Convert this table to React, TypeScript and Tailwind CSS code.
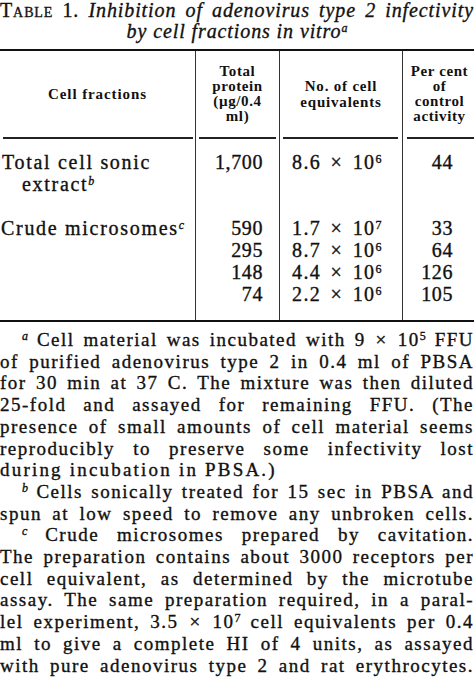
import React from 'react';

type Line = { text: React.ReactNode; mark?: string; left?: boolean };

const Sup = ({ children, italic }: { children: React.ReactNode; italic?: boolean }) => (
  <sup className={`text-[12px] tracking-normal ${italic ? 'italic' : ''}`}>{children}</sup>
);

const times = (a: string, exp: string) => (
  <>
    {a} <span className="mx-[3px]">×</span> 10<Sup>{exp}</Sup>
  </>
);

const notes: Line[] = [
  { mark: 'a', text: <>Cell material was incubated with 9 <span className="mx-[1px]">×</span> 10<Sup>5</Sup> FFU</> },
  { text: 'of purified adenovirus type 2 in 0.4 ml of PBSA' },
  { text: 'for 30 min at 37 C. The mixture was then diluted' },
  { text: '25-fold and assayed for remaining FFU. (The' },
  { text: 'presence of small amounts of cell material seems' },
  { text: 'reproducibly to preserve some infectivity lost' },
  { text: 'during incubation in PBSA.)', left: true },
  { mark: 'b', text: 'Cells sonically treated for 15 sec in PBSA and' },
  { text: 'spun at low speed to remove any unbroken cells.' },
  { mark: 'c', text: 'Crude microsomes prepared by cavitation.' },
  { text: 'The preparation contains about 3000 receptors per' },
  { text: 'cell equivalent, as determined by the microtube' },
  { text: 'assay. The same preparation required, in a paral-' },
  { text: <>lel experiment, 3.5 <span className="mx-[1px]">×</span> 10<Sup>7</Sup> cell equivalents per 0.4</> },
  { text: 'ml to give a complete HI of 4 units, as assayed' },
  { text: 'with pure adenovirus type 2 and rat erythrocytes.' },
];

const Blank = () => <div className="h-[22px]" />;

export default function App() {
  return (
    <div className="w-[474px] h-[678px] overflow-hidden bg-white text-[#111] [-webkit-text-stroke:0.35px] font-['Liberation_Serif','Times_New_Roman',serif]">
      {/* caption */}
      <div className="text-[20px] leading-[21px] tracking-[0.9px]">
        <div className="text-justify [text-align-last:justify]">
          <span className="[font-variant:small-caps]">Table 1.</span>{' '}
          <i>Inhibition of adenovirus type 2 infectivity</i>
        </div>
        <div className="text-center italic">
          by cell fractions in vitro<Sup italic>a</Sup>
        </div>
      </div>

      <div className="mt-[7px] h-[2px] bg-[#111]" />

      {/* table */}
      <div className="flex">
        <div className="w-[195px] flex flex-col">
          <div className="h-[86px] flex items-center justify-center text-[15px] leading-[16px] font-bold tracking-[0.9px] [-webkit-text-stroke:0px]">
            Cell fractions
          </div>
          <div className="h-[2px] ml-[3px] mr-[2px] bg-[#222]" />
          <div className="pt-[12px] pb-[15px] text-[20px] leading-[22px] tracking-[1.7px]">
            <div className="pl-[2px]">Total cell sonic</div>
            <div className="pl-[22px]">extract<Sup italic>b</Sup></div>
            <Blank />
            <div className="pl-[1px]">Crude microsomes<Sup italic>c</Sup></div>
          </div>
        </div>

        <div className="w-[84px] flex flex-col border-l border-[#333]">
          <div className="h-[86px] flex flex-col items-center justify-center text-center text-[15px] leading-[15px] font-bold tracking-[0.6px] [-webkit-text-stroke:0px]">
            <div>Total</div>
            <div>protein</div>
            <div>(µg/0.4</div>
            <div>ml)</div>
          </div>
          <div className="h-[2px] mx-[3px] bg-[#222]" />
          <div className="pt-[12px] pb-[15px] pr-[16px] text-right text-[20px] leading-[22px] tracking-[0.6px]">
            <div>1,700</div>
            <Blank />
            <Blank />
            <div>590</div>
            <div>295</div>
            <div>148</div>
            <div>74</div>
          </div>
        </div>

        <div className="w-[123px] flex flex-col border-l border-[#333]">
          <div className="h-[86px] flex flex-col items-center justify-center text-center text-[15px] leading-[16px] font-bold tracking-[0.8px] [-webkit-text-stroke:0px]">
            <div>No. of cell</div>
            <div>equivalents</div>
          </div>
          <div className="h-[2px] ml-[3px] mr-[4px] bg-[#222]" />
          <div className="pt-[12px] pb-[15px] pl-[12px] text-[20px] leading-[22px] tracking-[1.4px] whitespace-nowrap">
            <div>{times('8.6', '6')}</div>
            <Blank />
            <Blank />
            <div>{times('1.7', '7')}</div>
            <div>{times('8.7', '6')}</div>
            <div>{times('4.4', '6')}</div>
            <div>{times('2.2', '6')}</div>
          </div>
        </div>

        <div className="w-[72px] flex flex-col border-l border-[#333]">
          <div className="h-[86px] flex flex-col items-center justify-center text-center text-[15px] leading-[15px] font-bold tracking-[0.6px] pl-[2px] [-webkit-text-stroke:0px]">
            <div className="whitespace-nowrap">Per cent</div>
            <div>of</div>
            <div>control</div>
            <div>activity</div>
          </div>
          <div className="h-[2px] ml-[4px] bg-[#222]" />
          <div className="pt-[12px] pb-[15px] pr-[21px] text-right text-[20px] leading-[22px] tracking-[0.6px]">
            <div>44</div>
            <Blank />
            <Blank />
            <div>33</div>
            <div>64</div>
            <div>126</div>
            <div>105</div>
          </div>
        </div>
      </div>

      <div className="h-[2px] bg-[#111]" />

      {/* footnotes */}
      <div className="mt-[7px] text-[19px] leading-[21.7px] tracking-[1.5px]">
        {notes.map((n, i) => (
          <div
            key={i}
            className={`${n.left ? 'text-left tracking-[2.2px]' : 'text-justify [text-align-last:justify]'} ${n.mark ? 'pl-[22px]' : ''}`}
          >
            {n.mark && (
              <>
                <Sup italic>{n.mark}</Sup>{' '}
              </>
            )}
            {n.text}
          </div>
        ))}
      </div>
    </div>
  );
}
